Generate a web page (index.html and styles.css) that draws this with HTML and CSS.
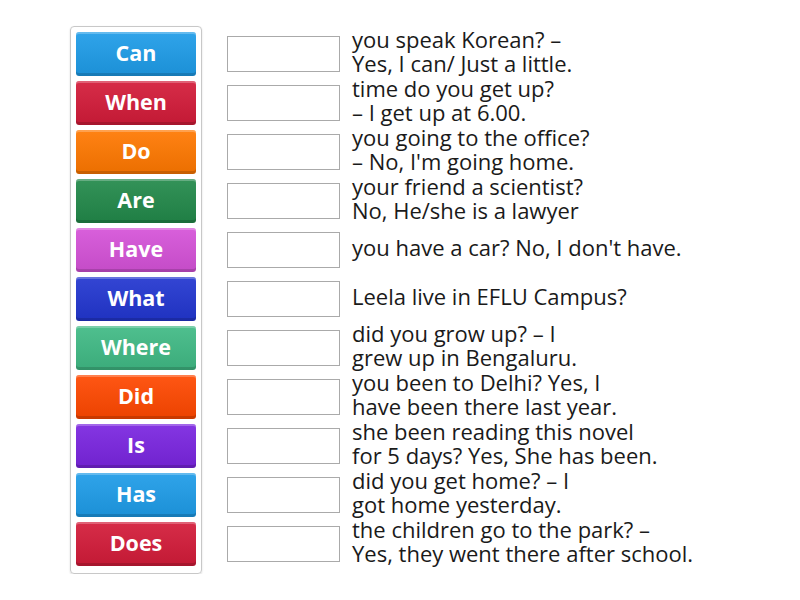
FILE: index.html
```html
<!DOCTYPE html>
<html lang="en">
<head>
    <meta charset="UTF-8">
    <meta name="viewport" content="width=device-width, initial-scale=1.0">
    <title>Match up</title>
    <link rel="stylesheet" href="styles.css">
</head>
<body>
    <div class="board">
        <div class="tiles">
            <div class="tile blue">Can</div>
            <div class="tile red">When</div>
            <div class="tile orange">Do</div>
            <div class="tile green">Are</div>
            <div class="tile pink">Have</div>
            <div class="tile navy">What</div>
            <div class="tile teal">Where</div>
            <div class="tile flame">Did</div>
            <div class="tile purple">Is</div>
            <div class="tile blue">Has</div>
            <div class="tile red">Does</div>
        </div>
        <div class="rows">
            <div class="row"><div class="slot"></div><p>you speak Korean? –<br>Yes, I can/ Just a little.</p></div>
            <div class="row"><div class="slot"></div><p>time do you get up?<br>– I get up at 6.00.</p></div>
            <div class="row"><div class="slot"></div><p>you going to the office?<br>– No, I'm going home.</p></div>
            <div class="row"><div class="slot"></div><p>your friend a scientist?<br>No, He/she is a lawyer</p></div>
            <div class="row"><div class="slot"></div><p>you have a car? No, I don't have.</p></div>
            <div class="row"><div class="slot"></div><p>Leela live in EFLU Campus?</p></div>
            <div class="row"><div class="slot"></div><p>did you grow up? – I<br>grew up in Bengaluru.</p></div>
            <div class="row"><div class="slot"></div><p>you been to Delhi? Yes, I<br>have been there last year.</p></div>
            <div class="row"><div class="slot"></div><p>she been reading this novel<br>for 5 days? Yes, She has been.</p></div>
            <div class="row"><div class="slot"></div><p>did you get home? – I<br>got home yesterday.</p></div>
            <div class="row"><div class="slot"></div><p>the children go to the park? –<br>Yes, they went there after school.</p></div>
        </div>
    </div>
</body>
</html>
```

FILE: styles.css
```css
body {
    margin: 0;
    background: #fff;
    font-family: "Open Sans", "Liberation Sans", sans-serif;
}

.board {
    display: flex;
    align-items: flex-start;
    padding: 26px 0 0 70px;
}

.tiles {
    display: flex;
    flex-direction: column;
    gap: 5px;
    padding: 5px 5px 7px;
    border: 1px solid #c8c8c8;
    border-radius: 4px;
    box-shadow: 0 1px 2px rgba(0, 0, 0, 0.15);
}

.tile {
    width: 120px;
    height: 44px;
    box-sizing: border-box;
    padding-bottom: 4px;
    border-radius: 3px;
    color: #fff;
    font-size: 21.5px;
    font-weight: 700;
    display: flex;
    align-items: center;
    justify-content: center;
    box-shadow: inset 0 2px 0 rgba(255, 255, 255, 0.25), inset 0 -3px 0 rgba(0, 0, 0, 0.15);
    background-image: linear-gradient(to bottom, rgba(255, 255, 255, 0.08), rgba(0, 0, 0, 0.08));
}

.blue { background-color: #1e9ce8; }
.red { background-color: #d31b39; }
.orange { background-color: #ff7800; }
.green { background-color: #22894a; }
.pink { background-color: #d552d8; }
.navy { background-color: #2236d0; }
.teal { background-color: #40ba85; }
.flame { background-color: #ff4800; }
.purple { background-color: #7a25e0; }

.rows {
    display: flex;
    flex-direction: column;
    padding-top: 3px;
    margin-left: 25px;
}

.row {
    height: 49px;
    display: flex;
    align-items: center;
}

.slot {
    width: 111px;
    height: 34px;
    border: 1px solid #aaa;
    flex-shrink: 0;
}

.row p {
    margin: 0 0 0 12px;
    font-size: 22px;
    line-height: 24px;
    color: #1a1a1a;
    white-space: nowrap;
    position: relative;
    top: -3px;
}
```
